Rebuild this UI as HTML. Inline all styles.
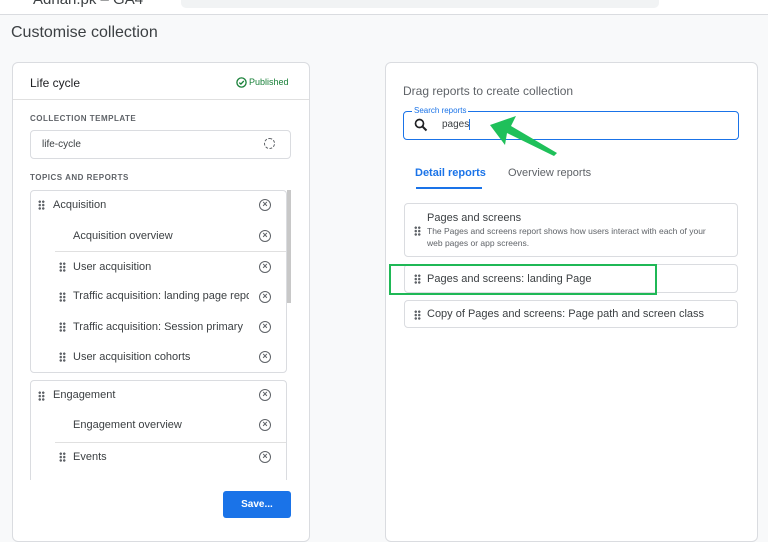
<!DOCTYPE html>
<html><head><meta charset="utf-8"><style>
*{box-sizing:border-box;margin:0;padding:0}
body{width:768px;height:526px;overflow:hidden;background:#f8f9fa;font-family:"Liberation Sans",Arial,sans-serif;position:relative;color:#3c4043}
.a{position:absolute}
.card{position:absolute;background:#fff;border:1px solid #dadce0;border-radius:6px}
.lbl{font-size:8px;letter-spacing:.5px;color:#5f6368;font-weight:bold}
.row{position:absolute;font-size:11px;color:#3c4043;white-space:nowrap}
.x{position:absolute;width:12px;height:12px;border:1.5px solid #5f6368;border-radius:50%;font-size:9px;line-height:9px;text-align:center;color:#5f6368;font-weight:bold}
.dots{position:absolute;width:7px;height:10px;background-image:radial-gradient(circle,#5f6368 1.1px,transparent 1.3px);background-size:3.5px 3.4px}
.box{position:absolute;border:1px solid #dadce0;border-radius:4px;background:#fff}
</style></head><body>
<div class="a" style="left:0;top:0;width:768px;height:15px;background:#fff;border-bottom:1px solid #dadce0"></div>
<div class="a" style="left:33px;top:-9px;font-size:15px;color:#3c4043">Adnan.pk – GA4</div>
<div class="a" style="left:181px;top:0;width:478px;height:8px;background:#f1f3f4;border-radius:0 0 5px 5px"></div>
<div class="a" style="left:11px;top:24px;font-size:16px;color:#3c4043">Customise collection</div>

<div class="card" style="left:12px;top:62px;width:298px;height:480px">
<div class="a" style="left:17px;top:13px;font-size:12px;color:#202124">Life cycle</div>
<svg class="a" style="left:223px;top:14px" width="11" height="11" viewBox="0 0 11 11"><circle cx="5.5" cy="5.5" r="4.6" fill="none" stroke="#188038" stroke-width="1.3"/><path d="M3.3 5.6L4.9 7.1L7.8 4" fill="none" stroke="#188038" stroke-width="1.3"/></svg>
<div class="a" style="left:236px;top:14px;font-size:9px;color:#188038">Published</div>
<div class="a" style="left:0;top:36px;width:296px;height:1px;background:#e0e0e0"></div>
<div class="a lbl" style="left:17px;top:51px">COLLECTION TEMPLATE</div>
<div class="box" style="left:17px;top:67px;width:261px;height:29px"></div>
<div class="a" style="left:29px;top:76px;font-size:10px;color:#3c4043">life-cycle</div>
<div class="a" style="left:251px;top:75px;width:11px;height:11px;border:1.3px dashed #5f6368;border-radius:50%"></div>
<div class="a lbl" style="left:17px;top:110px">TOPICS AND REPORTS</div>
<div class="box" style="left:17px;top:127px;width:257px;height:183px"></div>
<div class="a" style="left:274px;top:127px;width:4px;height:113px;background:#c8c8c8"></div>
<div class="a" style="left:42px;top:188px;width:231px;height:1px;background:#e0e0e0"></div>
<div class="box" style="left:17px;top:317px;width:257px;height:100px;border-bottom:none;border-radius:4px 4px 0 0"></div>
<div class="a" style="left:42px;top:379px;width:231px;height:1px;background:#e0e0e0"></div>
<div class="a" style="left:210px;top:428px;width:68px;height:27px;background:#1a73e8;border-radius:3px;color:#fff;font-size:10px;font-weight:bold;text-align:center;line-height:27px">Save...</div>
</div>

<div class="dots" style="left:38px;top:200px"></div><div class="row" style="left:53px;top:199px">Acquisition</div><div class="x" style="left:259px;top:199px">×</div>
<div class="row" style="left:73px;top:230px">Acquisition overview</div><div class="x" style="left:259px;top:230px">×</div>
<div class="dots" style="left:59px;top:262px"></div><div class="row" style="left:73px;top:261px">User acquisition</div><div class="x" style="left:259px;top:261px">×</div>
<div class="dots" style="left:59px;top:292px"></div><div class="row" style="left:73px;top:290px;width:176px;overflow:hidden">Traffic acquisition: landing page report</div><div class="x" style="left:259px;top:291px">×</div>
<div class="dots" style="left:59px;top:322px"></div><div class="row" style="left:73px;top:321px;width:176px;overflow:hidden">Traffic acquisition: Session primary</div><div class="x" style="left:259px;top:321px">×</div>
<div class="dots" style="left:59px;top:352px"></div><div class="row" style="left:73px;top:351px">User acquisition cohorts</div><div class="x" style="left:259px;top:351px">×</div>
<div class="dots" style="left:38px;top:391px"></div><div class="row" style="left:53px;top:389px">Engagement</div><div class="x" style="left:259px;top:389px">×</div>
<div class="row" style="left:73px;top:419px">Engagement overview</div><div class="x" style="left:259px;top:419px">×</div>
<div class="dots" style="left:59px;top:452px"></div><div class="row" style="left:73px;top:451px">Events</div><div class="x" style="left:259px;top:451px">×</div>

<div class="card" style="left:385px;top:62px;width:373px;height:480px">
<div class="a" style="left:17px;top:21px;font-size:12px;color:#5f6368">Drag reports to create collection</div>
</div>
<div class="a" style="left:403px;top:111px;width:336px;height:29px;border:1px solid #1a73e8;border-radius:4px;background:#fff"></div>
<div class="a" style="left:412px;top:106px;padding:0 2px;background:#fff;font-size:8px;color:#1a73e8">Search reports</div>
<svg class="a" style="left:414px;top:118px" width="14" height="14" viewBox="0 0 14 14"><circle cx="5.5" cy="5.5" r="4" fill="none" stroke="#202124" stroke-width="1.7"/><path d="M8.5 8.5L12.5 12.5" stroke="#202124" stroke-width="2"/></svg>
<div class="a" style="left:442px;top:119px;font-size:10px;color:#3c4043">pages<span style="border-right:1px solid #1a73e8"></span></div>
<div class="a" style="left:415px;top:167px;font-size:11px;color:#1a73e8;font-weight:bold">Detail reports</div>
<div class="a" style="left:416px;top:187px;width:66px;height:2px;background:#1a73e8"></div>
<div class="a" style="left:508px;top:167px;font-size:11px;color:#5f6368">Overview reports</div>
<div class="box" style="left:404px;top:203px;width:334px;height:54px"></div>
<div class="dots" style="left:414px;top:226px"></div>
<div class="a" style="left:427px;top:212px;font-size:11px;color:#3c4043">Pages and screens</div>
<div class="a" style="left:427px;top:225px;font-size:8.5px;color:#5f6368;line-height:12px;width:295px">The Pages and screens report shows how users interact with each of your web pages or app screens.</div>
<div class="box" style="left:404px;top:264px;width:334px;height:29px"></div>
<div class="dots" style="left:414px;top:274px"></div>
<div class="a" style="left:427px;top:273px;font-size:11px;color:#3c4043">Pages and screens: landing Page</div>
<div class="a" style="left:389px;top:264px;width:268px;height:31px;border:2px solid #1fb856"></div>
<div class="box" style="left:404px;top:300px;width:334px;height:28px"></div>
<div class="dots" style="left:414px;top:310px"></div>
<div class="a" style="left:427px;top:308px;font-size:11px;color:#3c4043">Copy of Pages and screens: Page path and screen class</div>
<svg class="a" style="left:0;top:0" width="768" height="526"><polygon points="490,125 516,116 511,126 557,153 554,156 507,133 505,145" fill="#1fc05a"/></svg>
</body></html>
